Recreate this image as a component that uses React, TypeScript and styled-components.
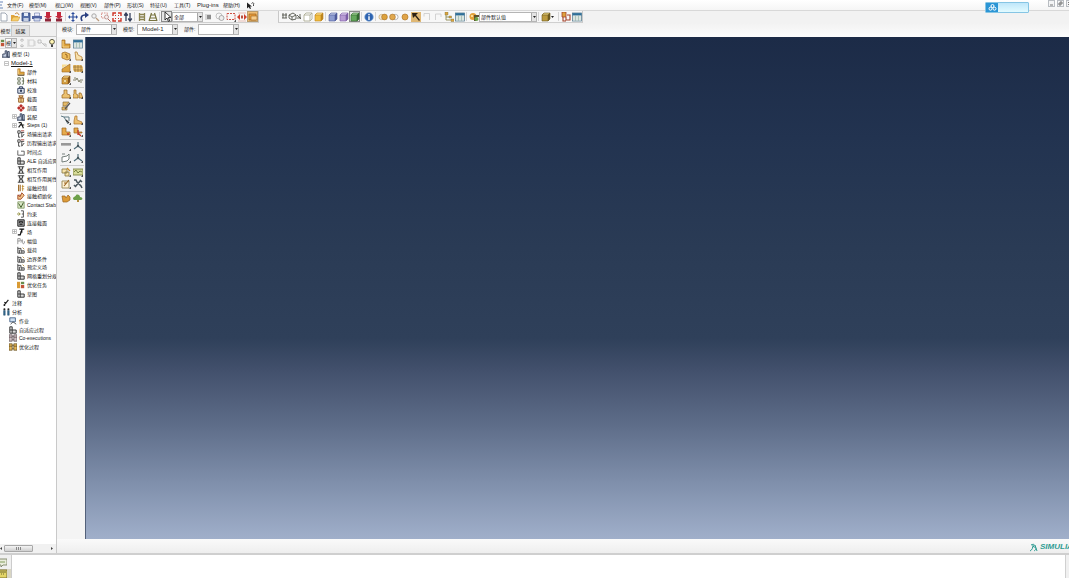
import React from "react";
import styled, { createGlobalStyle, css } from "styled-components";

const GlobalStyle = createGlobalStyle`
  * { box-sizing: border-box; }
  html, body { margin: 0; padding: 0; }
  body {
    font-family: "Liberation Sans", "Noto Sans CJK SC", sans-serif;
    font-size: 5px;
    line-height: 8px;
    color: #222;
    background: #f0f0f0;
    overflow: hidden;
  }
  button, select, input { font: inherit; color: inherit; }
  button { border: 0; padding: 0; background: none; }
`;

const Window = styled.div`
  display: flex;
  flex-direction: column;
  height: 100vh;
  overflow: hidden;
`;

const MenuBar = styled.nav`
  display: flex;
  flex: none;
  align-items: center;
  height: 11px;
  background: linear-gradient(#ffffff, #f5f5f5);
  border-bottom: 1px solid #d8d8d8;
`;

const MenuList = styled.div`
  display: flex;
  align-items: center;
  flex: 1;
`;

const MenuItem = styled.button<{ $latin?: boolean; $w: number }>`
  flex: none;
  width: ${(p) => p.$w}px;
  text-align: left;
  white-space: nowrap;
  font-size: ${(p) => (p.$latin ? 6 : 5)}px;
  line-height: 8px;
`;

const MenuIcon = styled.button`
  width: 7px;
  height: 8px;
  display: flex;
`;

const Badge = styled.div`
  display: flex;
  position: absolute;
  top: 2px;
  right: 40px;
  width: 44px;
  height: 11px;
  border: 1px solid #86c5e4;
  border-radius: 1px;
  background: linear-gradient(#bfe6fa, #e2fbff);
  overflow: hidden;
`;

const BadgeIcon = styled.span`
  display: flex;
  justify-content: center;
  width: 12px;
  background: #2b95d5;
`;

const WindowButtons = styled.div`
  display: flex;
  gap: 2px;
  margin-right: -4px;
  align-self: flex-start;
`;

const WindowButton = styled.button`
  display: flex;
  align-items: center;
  justify-content: center;
  width: 7px;
  height: 7px;
  border: 1px solid #b9bdc2;
  background: #f3f4f5;
`;

const ToolBar = styled.div`
  display: flex;
  flex: none;
  align-items: center;
  height: 12px;
  background: #f2f2f2;
`;

const ToolStrip = styled.div<{ $first?: boolean }>`
  display: flex;
  flex: none;
  align-items: center;
  height: 12px;
  background: #f7f7f7;
  border-bottom: 1px solid #cfcfcf;
  border-right: 1px solid #c8c8c8;
  ${(p) =>
    p.$first
      ? css`margin-left: -2px;`
      : css`
          margin-left: 19px;
          padding-left: 3px;
          border-left: 1px solid #c8c8c8;
        `}
`;

const Divider = styled.i`
  flex: none;
  width: 1px;
  height: 9px;
  margin: 0 1px;
  background: #d4d4d4;
`;

const ToolButton = styled.button<{ $wide?: boolean; $boxed?: boolean; $hot?: boolean }>`
  display: flex;
  flex: none;
  align-items: center;
  justify-content: center;
  width: ${(p) => (p.$wide ? 20 : 11)}px;
  height: 11px;
  ${(p) => p.$boxed && css`border: 1px solid #8b8b8b; background: #e6e6e6;`}
  ${(p) => p.$hot && css`border: 1px solid #b99b6b; background: #f0bd72;`}
`;

const Glyph = styled.svg`
  display: block;
  flex: none;
  width: 10px;
  height: 10px;
`;

const Caret = styled.span`
  display: flex;
  align-items: center;
  width: 6px;
  height: 10px;
`;

const Combo = styled.span<{ $w: number; $tall?: boolean }>`
  display: flex;
  flex: none;
  width: ${(p) => p.$w}px;
  height: ${(p) => (p.$tall ? 11 : 10)}px;
  border: 1px solid #b5b5b5;
  background: #fff;
`;

const ComboSelect = styled.select<{ $latin?: boolean; $indent?: number }>`
  appearance: none;
  flex: 1;
  min-width: 0;
  border: 0;
  margin: 0;
  padding: 0 0 0 ${(p) => p.$indent ?? 1}px;
  background: transparent;
  font-size: ${(p) => (p.$latin ? 6 : 5)}px;
  line-height: 8px;
  outline: 0;
`;

const ComboArrow = styled.span`
  display: flex;
  align-items: center;
  justify-content: center;
  width: 5px;
  background: #e4e4e4;
  border-left: 1px solid #a9a9a9;
`;

const Body = styled.div`
  display: flex;
  flex: 1;
  min-height: 0;
`;

const Sidebar = styled.aside`
  display: flex;
  flex-direction: column;
  flex: none;
  width: 57px;
  border-right: 1px solid #c9c9c9;
  overflow: hidden;
`;

const Tabs = styled.div`
  display: flex;
  align-items: flex-end;
  flex: none;
  height: 14px;
  padding-top: 2px;
  border-bottom: 1px solid #c9c9c9;
`;

const Tab = styled.button<{ $active?: boolean }>`
  height: ${(p) => (p.$active ? 12 : 11)}px;
  width: ${(p) => (p.$active ? 12 : 18)}px;
  color: #111;
  white-space: nowrap;
  overflow: hidden;
  border-top: 1px solid ${(p) => (p.$active ? "#f4f4f4" : "#c9c9c9")};
  border-right: 1px solid #c9c9c9;
  background: ${(p) => (p.$active ? "#f4f4f4" : "#e3e3e3")};
`;

const TreeTools = styled.div`
  display: flex;
  flex: none;
  align-items: center;
  height: 12px;
  margin-left: -3px;
  background: #f4f4f4;
  border-bottom: 1px solid #dcdcdc;
`;

const TreePane = styled.div`
  flex: 1;
  min-height: 0;
  padding-top: 1px;
  background: #fff;
  overflow: hidden;
`;

const TreeList = styled.ul`
  display: flex;
  flex-direction: column;
  height: 60vh;
  max-height: 302px;
  margin: 0;
  padding: 0;
  list-style: none;
`;

const TreeRow = styled.li<{ $level: number; $latin?: boolean }>`
  display: flex;
  flex: 1;
  align-items: center;
  min-height: 0;
  padding-left: ${(p) => [2, 4, 12, 9][p.$level]}px;
  font-size: ${(p) => (p.$latin ? 6 : 5)}px;
  line-height: 8px;
  white-space: nowrap;
  color: #151515;
`;

const Expander = styled.span`
  display: flex;
  flex: none;
  width: 5px;
`;

const TreeLink = styled.a<{ $current?: boolean }>`
  color: inherit;
  text-decoration: ${(p) => (p.$current ? "underline" : "none")};
  margin-left: 2px;
`;

const TreeGlyph = styled(Glyph)`
  width: 8px;
  height: 8px;
`;

const ScrollTrack = styled.div`
  display: flex;
  flex: none;
  align-items: center;
  justify-content: space-between;
  height: 9px;
  padding-right: 2px;
  background: #f1f1f1;
`;

const ScrollThumb = styled.span`
  display: flex;
  align-items: center;
  justify-content: center;
  gap: 1px;
  width: 29px;
  height: 7px;
  margin-right: auto;
  border: 1px solid #a8a8a8;
  border-radius: 1px;
  background: linear-gradient(#f4f4f4, #cfcfcf);
`;

const Grip = styled.i`
  width: 1px;
  height: 3px;
  background: #888;
`;

const Main = styled.main`
  display: flex;
  flex: 1;
  flex-direction: column;
  min-width: 0;
`;

const ContextBar = styled.div`
  display: flex;
  flex: none;
  align-items: center;
  gap: 6px;
  height: 14px;
  padding: 0 5px 2px;
  background: linear-gradient(#f2f2f2, #fcfcfc);
`;

const Field = styled.label`
  display: flex;
  align-items: center;
  gap: 1px;
  white-space: nowrap;
`;

const FieldText = styled.span`
  width: 13px;
`;

const Workspace = styled.div`
  display: flex;
  flex: 1;
  min-height: 0;
`;

const ToolBox = styled.div`
  flex: none;
  width: 28px;
  padding: 1px 1px 0 3px;
  background: #f4f4f4;
`;

const ToolBoxGroup = styled.div`
  display: grid;
  grid-template-columns: 12px 12px;
  grid-auto-rows: 12px;
  place-items: center;
  & + & {
    margin-top: 1px;
    border-top: 1px solid #cccccc;
  }
`;

const Viewport = styled.section`
  flex: 1;
  border-left: 1px solid #53617a;
  background: linear-gradient(
    #1c2b47 0%,
    #223350 20%,
    #2a3b55 42%,
    #2f405a 60%,
    #414f6b 66%,
    #5d6c88 77%,
    #8090ac 89%,
    #a0afca 100%
  );
`;

const BrandBar = styled.footer`
  display: flex;
  flex: none;
  align-items: center;
  justify-content: flex-end;
  height: 14px;
  padding-top: 2px;
  background: linear-gradient(#fafafa, #eeeeee);
`;

const Brand = styled.span`
  display: flex;
  flex: none;
  align-items: center;
  gap: 2px;
  width: 40px;
  overflow: hidden;
  color: #2f9c93;
  font-size: 8px;
  font-style: italic;
  font-weight: bold;
  line-height: 10px;
`;

const BrandMark = styled.svg`
  flex: none;
  width: 9px;
  height: 9px;
`;

const MessageArea = styled.div`
  display: flex;
  flex: none;
  height: 25px;
  border-top: 2px solid #cfcfcf;
`;

const MessageTabs = styled.div`
  display: flex;
  flex: none;
  flex-direction: column;
  gap: 2px;
  width: 12px;
  padding-top: 2px;
  border-right: 1px solid #cccccc;
`;

const MessageTab = styled.button<{ $on?: boolean }>`
  height: 11px;
  display: flex;
  margin-left: -3px;
  background: ${(p) => (p.$on ? "#d9d6c4" : "transparent")};
`;

const MessageLog = styled.div`
  flex: 1;
  margin-right: 3px;
  background: #fff;
  border-right: 1px solid #d0d0d0;
`;

const gold = "#dda23c";
const brown = "#9a6420";
const ink = "#333";

const partShape = (
  <>
    <path d="M1 1h3v4h5v4H1z" fill={gold} stroke={brown} strokeWidth=".7" />
    <path d="M2 2v6h6" stroke="#f6d48a" fill="none" />
  </>
);
const more = <path d="M8 9.8h2V7.8z" fill="#222" />;
const cube = (a: string, b: string, c: string) => (
  <>
    <path d="M1 3l2-2h6v6L7 9H1z" fill={a} />
    <path d="M1 3l2-2h6L7 3z" fill={b} />
    <path d="M7 3l2-2v6L7 9z" fill={c} />
    <path d="M1 3h6v6H1zM1 3l2-2h6v6L7 9M7 3l2-2" fill="none" stroke={c} strokeWidth=".6" />
  </>
);
const treePart = (
  <path d="M1 1h3v4h5v4H1zM4 5v4M1 5h3" fill="#ddd" stroke={ink} strokeWidth="1.2" />
);
const table = (
  <>
    <rect x=".5" y="1" width="9" height="8" fill="#fff" stroke="#5b7f92" strokeWidth=".8" />
    <path d="M.5 2.3h9" stroke="#2f6f98" strokeWidth="2.4" />
    <path d="M1 5h8M1 7h8M3.5 3v6M6.5 3v6" stroke="#9ab4a8" strokeWidth=".7" />
  </>
);

const drawings: Record<string, React.ReactNode> = {
  file: <path d="M2 1h4l2 2v6H2z" fill="#fff" stroke="#8a94a3" strokeWidth=".8" />,
  open: (
    <>
      <path d="M1 3h3l1 1h3v5H1z" fill="#e2a63d" />
      <path d="M1 9l2-4h7L8 9z" fill="#f7cf6f" stroke="#c18a2a" strokeWidth=".5" />
      <path d="M5 2c2-2 3-1 4 1" stroke="#c07c28" fill="none" />
    </>
  ),
  save: (
    <>
      <path d="M1 1h8v8H1z" fill="#5670a8" stroke="#30487c" strokeWidth=".8" />
      <path d="M3 1h4v3H3z" fill="#e3ebf7" />
      <path d="M2.5 6h5v3h-5z" fill="#c5d0e4" />
    </>
  ),
  print: (
    <>
      <path d="M2.5 1h5v3h-5z" fill="#eef" stroke="#6677a3" strokeWidth=".6" />
      <path d="M0 4h10v3H0z" fill="#5063a0" />
      <path d="M2 6h6v3H2z" fill="#d6def0" stroke="#5063a0" strokeWidth=".6" />
    </>
  ),
  db: (
    <>
      <path d="M3 0h4v4h2L5 7 1 4h2z" fill="#c3283c" />
      <path d="M2 6.5h6v3H2z" fill="#8e2639" />
    </>
  ),
  pan: (
    <path
      d="M5 0l2 2H5.6v2.4H8V3l2 2-2 2V5.6H5.6V8H7l-2 2-2-2h1.4V5.6H2V7L0 5l2-2v1.4h2.4V2H3z"
      fill="#2b4c9b"
    />
  ),
  rotate: (
    <>
      <path d="M3 9C1 5 3 2.500 7 3" fill="none" stroke="#2a3f80" strokeWidth="1.6" />
      <path d="M6 0l4 3-4 3z" fill="#2a3f80" />
    </>
  ),
  zoom: (
    <>
      <circle cx="4" cy="4" r="2.2" fill="#f3f3f3" stroke="#a8a8a8" />
      <path d="M6 6l3 3" stroke="#b99a7c" strokeWidth="1.3" />
    </>
  ),
  zoomBox: (
    <>
      <path d="M.5 1h6v5h-6z" fill="none" stroke="#d57c72" strokeDasharray="1.5 1" strokeWidth=".8" />
      <circle cx="5.5" cy="5" r="2" fill="#f5eeee" stroke="#b98b86" strokeWidth=".8" />
      <path d="M7 7l2.5 2.5" stroke="#b06a60" />
    </>
  ),
  fit: (
    <>
      <path d="M1 4V1h3M6 1h3v3M9 6v3H6M4 9H1V6" fill="none" stroke="#cf3426" strokeWidth="1.4" />
      <path d="M3 3l1 1M7 3L6 4M3 7l1-1M7 7L6 6" stroke="#cf3426" />
    </>
  ),
  updown: (
    <path
      d="M3 9V2M1.2 3.5L3 1l1.8 2.500M7 1v7M5.200 6.500L7 9l1.800-2.500"
      fill="none"
      stroke="#35405c"
      strokeWidth="1.3"
    />
  ),
  grid: (
    <path d="M2.500 1v8M7.500 1v8M2 2.5h6M2 5h6M2 7.5h6" fill="none" stroke="#8b8351" strokeWidth="1.3" />
  ),
  persp: (
    <path d="M3.5 1L1 9M6.5 1L9 9M3 3h4M2 6h6M1 8.5h8" fill="none" stroke="#77733f" strokeWidth="1.2" />
  ),
  cursor: (
    <path d="M3 0v8l2-2 1.5 3.5 1.2-.6L6.3 5.5H9z" fill="#fff" stroke="#222" strokeWidth=".9" />
  ),
  dot: (
    <>
      <path d="M1 2h6v6H1z" fill="#d9d9d9" />
      <path d="M3 3h4v4H3z" fill="#8c8c8c" />
    </>
  ),
  rings: (
    <>
      <circle cx="4" cy="4" r="3" fill="none" stroke="#b5b5b5" strokeWidth=".8" />
      <circle cx="6.5" cy="6" r="2.5" fill="#eee" stroke="#999" strokeWidth=".8" />
    </>
  ),
  dashBox: (
    <>
      <path d="M1 1.5h8v6H1z" fill="none" stroke="#cf5044" strokeDasharray="2 1" />
      {more}
    </>
  ),
  redArrows: (
    <>
      <path d="M0 5l3-3v6zM10 5L7 2v6z" fill="#d0402d" />
      <path d="M4 3.500h2v3H4z" fill="#b8503d" />
      <path d="M1 1h8M1 9h8" stroke="#e0a397" strokeWidth=".7" />
    </>
  ),
  orangeBox: (
    <>
      <path d="M1 2h7v6H1z" fill="#e89b36" stroke="#9b6426" strokeWidth=".7" />
      <path d="M3 4h6v4H3z" fill="#f7cd8a" stroke="#9b6426" strokeWidth=".6" />
    </>
  ),
  wire: <path d="M1 3l2-2h6v6L7 9H1zM1 3h6v6M7 3l2-2" fill="#fff" stroke="#a4a48a" strokeWidth=".8" />,
  solid: cube("#f1bd3e", "#ffe28a", "#bd8520"),
  blueCube: cube("#8d9cd0", "#c0caea", "#4d5b9a"),
  violetCube: cube("#b79bd3", "#dccdee", "#7d5da6"),
  greenCube: cube("#65a85c", "#9fd093", "#32692f"),
  oliveCube: cube("#bb9a3f", "#e3ca78", "#6d5a22"),
  info: (
    <>
      <circle cx="5" cy="5" r="4.3" fill="#2d63b0" stroke="#8eb0da" strokeWidth=".7" />
      <path d="M5 2v1.3M5 4.2V8" stroke="#fff" strokeWidth="1.4" />
    </>
  ),
  ball2: (
    <>
      <circle cx="3.5" cy="5" r="2.6" fill="#f3ead8" stroke="#c7a669" strokeWidth=".7" />
      <circle cx="6.5" cy="5" r="2.9" fill={gold} stroke={brown} strokeWidth=".5" />
    </>
  ),
  ball2b: (
    <>
      <circle cx="6.5" cy="5" r="2.6" fill="#fff" stroke="#999" strokeWidth=".7" />
      <circle cx="3.5" cy="5" r="2.9" fill="#e0a84e" stroke={brown} strokeWidth=".5" />
    </>
  ),
  ball: <circle cx="5" cy="5" r="3" fill="#e0a448" stroke="#b27a2b" strokeWidth=".7" />,
  paint: (
    <>
      <path d="M0 0h10v10H0z" fill="#e0b874" />
      <path d="M1 1h6L5 3l4 5-1 1-4-5-2 2z" fill="#2b2014" />
    </>
  ),
  undo: <path d="M2 1.5h5.5V8M2 1.5v3" fill="none" stroke="#c9c9c9" strokeWidth=".8" />,
  redo: <path d="M8 2H2.5v6M8 2v3" fill="none" stroke="#c9c9c9" strokeWidth=".8" />,
  tree: (
    <>
      <path d="M2 1v7h6M2 5h3" stroke="#8f8a54" fill="none" strokeWidth=".9" />
      <path d="M1 0h3v3H1zM5 4h2.5v2H5zM7 7h3v2.5H7z" fill={gold} stroke="#77733f" strokeWidth=".4" />
    </>
  ),
  table,
  palette: (
    <>
      <circle cx="4" cy="4.5" r="3.5" fill="#e2a13a" />
      <path d="M5 3h5v2H7v4H5z" fill="#5d5130" />
      <circle cx="3" cy="4" r="1" fill="#fff0b8" />
      <circle cx="7.5" cy="7" r="2" fill="#6aa247" />
    </>
  ),
  hier: (
    <>
      <path d="M1 0h4v5H1z" fill={gold} stroke="#a3432b" strokeWidth=".8" />
      <path d="M2 5v4h3M6 3h3v5H5V5" stroke="#a3432b" fill="none" strokeWidth="1.1" />
    </>
  ),
  part: partShape,
  partCube: (
    <>
      <path d="M1 2l3-1 5 2v5L6 9 1 7z" fill="#edbd5e" stroke={brown} strokeWidth=".7" />
      <path d="M4 3l2 1v3" fill="none" stroke={brown} />
      {more}
    </>
  ),
  partLight: (
    <>
      <path d="M2 1h2l1 3 4 2v3H3z" fill="#f9e2ad" stroke="#b68337" strokeWidth=".8" />
      {more}
    </>
  ),
  wedge: (
    <>
      <path d="M1 9V6l8-5v8z" fill={gold} stroke={brown} strokeWidth=".6" />
      <path d="M1 1.500h6L1 5z" fill="#f8dc90" />
      {more}
    </>
  ),
  mesh: (
    <>
      <path d="M0 2h8l2 2v5H2L0 7z" fill="#ecc170" />
      <path d="M0 4h9M2 2v7M5 2v7M8 2v7M1 7h9" stroke="#8a652c" strokeWidth=".6" />
      {more}
    </>
  ),
  dice: (
    <>
      {cube("#e6aa3e", "#ffdc86", "#80531b")}
      <circle cx="4" cy="6" r="1.5" fill="#fff0b8" stroke={brown} strokeWidth=".5" />
      {more}
    </>
  ),
  link: (
    <path d="M0 5h3l1-2 2 4 1-2h3M1 3h2M7 7h2" fill="none" stroke="#76775e" strokeWidth=".9" />
  ),
  cone: (
    <>
      <path d="M3 1h3v4l3 1v3H1V6l2-1z" fill="#ecc271" stroke={brown} strokeWidth=".7" />
      {more}
    </>
  ),
  conePair: (
    <>
      <path d="M1 1h2v4l2 1v3H0V6l1-1zM6 4h2l2 5H6z" fill="#ecc271" stroke={brown} strokeWidth=".7" />
      {more}
    </>
  ),
  pencil: (
    <>
      <path d="M2 1h6L5 5H2zM1 6h5v3H1z" fill="#e6bb69" stroke="#765a2b" strokeWidth=".6" />
      <path d="M9 2L4 8" stroke="#555" strokeWidth="1.2" />
    </>
  ),
  sketch: (
    <>
      <path d="M0 1l3 1 4 7M3 2h5v4" fill="none" stroke="#5f7a84" />
      <path d="M5 5l3 3" stroke="#333" strokeWidth="1.3" />
      {more}
    </>
  ),
  foot: (
    <>
      <path d="M2 1h2v4l5 2v2H1V6z" fill="#eec070" stroke="#ac742a" strokeWidth=".7" />
      {more}
    </>
  ),
  partRed: (
    <>
      <path d="M1 1h4v4h4v3H1z" fill="#e7aa4c" stroke={brown} strokeWidth=".7" />
      <path d="M6 7h2" stroke="#c1382a" strokeWidth="1.3" />
      {more}
    </>
  ),
  partCut: (
    <>
      <path d="M1 1h4v4h4v1H1z" fill="#e7aa4c" stroke={brown} strokeWidth=".7" />
      <path d="M5 3v5M5 6l3 3" stroke="#c1382a" strokeWidth="1.3" />
      {more}
    </>
  ),
  ruler: (
    <>
      <path d="M0 3h10M1 2v3M3 2v3M5 2v3M7 2v3M9 2v3" stroke="#666" strokeWidth=".8" />
      {more}
    </>
  ),
  triad: (
    <>
      <path d="M5 1v4L1 8M5 5l4 3" fill="none" stroke="#4c6a76" strokeWidth="1.1" />
      <circle cx="5" cy="5" r="1.2" fill="#47565c" />
      {more}
    </>
  ),
  plane: (
    <>
      <path d="M1 4l5-1 2-2v5L6 8 1 9zM1 1h3" fill="#fff" stroke="#66736f" strokeWidth=".9" />
      {more}
    </>
  ),
  refine: (
    <>
      <path d="M1 2h5v4H1zM4 5h4v4H4z" fill="#f7e3aa" stroke="#85743e" strokeWidth=".8" />
      <path d="M6 1l3 3" stroke="#c98b22" strokeWidth="1.3" />
      {more}
    </>
  ),
  greenTable: (
    <>
      <path d="M0 2h10v6H0z" fill="#d8dc9a" stroke="#7f8344" strokeWidth=".9" />
      <path d="M1 5l2-2 2 3 2-2 2 1" stroke="#5c6a2c" fill="none" strokeWidth=".8" />
      {more}
    </>
  ),
  note: (
    <>
      <path d="M1 2h7v7H1z" fill="#fff3d6" stroke="#94844e" strokeWidth=".9" />
      <path d="M3 7l5-6M3 4h3" stroke="#9b6420" strokeWidth="1.1" />
      {more}
    </>
  ),
  wrench: (
    <path
      d="M1 1l2 0 1 2 4 4 1 2M8 1L2 8M7 1l2 2M1 6l2 2"
      fill="none"
      stroke="#4a565d"
      strokeWidth="1.5"
    />
  ),
  hand: (
    <path d="M1 3h3l1 2 2-3 2 2v3L6 9H2z" fill="#dc9b38" stroke={brown} strokeWidth=".7" />
  ),
  cloud: (
    <>
      <path d="M0 6c0-3 3-2 3-4 2-1 4 0 4 2 3 0 3 3 1 3H1z" fill="#6da04a" />
      <path d="M4 7h2v2H4z" fill="#b28e3b" />
    </>
  ),
  tPart: (
    <>
      {partShape}
      <path d="M1 9h8" stroke="#333" />
    </>
  ),
  tMat: (
    <path d="M1 1h3v3H1zM1 6h3v3H1zM6 1h2v8H6M6 5h3" fill="none" stroke="#5f6b4e" strokeWidth="1.1" />
  ),
  tCal: (
    <>
      <path d="M1 3h8v6H1zM3 3V1h4v2" fill="#dfe5f0" stroke="#32405d" strokeWidth="1.2" />
      <circle cx="5" cy="6" r="1.5" fill="#32405d" />
    </>
  ),
  tSec: (
    <path
      d="M2 1h6M3 1v2h4V1M1 4h8M2 4v5h6V4M5 4v5"
      fill="#f3d190"
      stroke="#935d28"
      strokeWidth="1.1"
    />
  ),
  tProf: (
    <>
      <path d="M5 0l5 5-5 5-5-5z" fill="#b92f2d" />
      <path d="M2 2l6 6M8 2L2 8" stroke="#f4d9cf" strokeWidth=".8" />
    </>
  ),
  tAsm: (
    <path d="M1 9V5h3V1h2v8M7 9V2h2v7zM0 9h10" fill="#c8d2e4" stroke="#3c4861" strokeWidth="1.2" />
  ),
  tStep: <path d="M2 2h3l3 7M5 4L2 8M5 5h4" stroke="#222" strokeWidth="1.5" fill="none" />,
  tOut: (
    <>
      <path
        d="M1 1h3v3H1zM2 4v5h2M5 3h4M6 3v6M9 5L6 9"
        fill="none"
        stroke="#3b3b3b"
        strokeWidth="1.1"
      />
      <path d="M5 1h4" stroke="#b03a30" strokeWidth="1.1" />
    </>
  ),
  tTime: <path d="M1 3v6h8V4H5" fill="none" stroke="#555" strokeWidth="1.1" />,
  tAle: treePart,
  tInt: (
    <path d="M1 1h8M3 1v3h4V1M1 9h8M3 9V6h4v3M5 4v2" fill="none" stroke="#333" strokeWidth="1.2" />
  ),
  tCtl: (
    <>
      <path d="M2 1v8M4 1v8" stroke="#9a6420" strokeWidth="1.3" />
      <path d="M6 3h3M6 6h3M7 1v8" stroke="#c08a2a" />
    </>
  ),
  tInit: (
    <path
      d="M1 9V4l3 2 2-5 3 3-4 5zM1 4h4"
      fill="#f3c98a"
      stroke="#a04824"
      strokeWidth="1.1"
    />
  ),
  tStab: (
    <>
      <path d="M1 1h8v8H1z" fill="#dbe8c8" stroke="#678044" strokeWidth=".8" />
      <path d="M2 3l3 5 3-6" stroke="#3f5a26" fill="none" strokeWidth="1.2" />
    </>
  ),
  tCon: (
    <>
      <path d="M0 5h4M2 3l2 2-2 2" stroke="#8b8733" fill="none" strokeWidth="1.1" />
      <path d="M5 1h3v8H5M8 5H6" fill="none" stroke="#454545" strokeWidth="1.1" />
    </>
  ),
  tConSec: (
    <path d="M1 1h8v8H1zM3 3h4v2H3zM3 7h4" fill="#aaa" stroke="#222" strokeWidth="1.2" />
  ),
  tField: (
    <path d="M3 1.5h6M6.5 1.5L4 8.5H1M4 5h3" fill="none" stroke="#111" strokeWidth="1.5" />
  ),
  tAmp: (
    <path d="M1 9V2h3v3H1M5 7c1-5 2-5 2-1s2 3 3-1" fill="none" stroke="#777" strokeWidth=".9" />
  ),
  tLoad: (
    <>
      <path d="M1 1v8h8V6H5V3H1M3 5v4M6 6v3" fill="#ddd" stroke="#444" strokeWidth="1.1" />
      <path d="M7 2l2 2" stroke="#b08024" />
    </>
  ),
  tOpt: (
    <>
      <path d="M0 1h4v8H0z" fill="#d99a33" />
      <path d="M5 1h4v3H5z" fill="#688c4c" />
      <path d="M5 5h4v4H5z" fill="#c2553a" />
    </>
  ),
  tAnn: <path d="M2 8l2-2 4-5M3 4l2 2M2 8h2" fill="none" stroke="#222" strokeWidth="1.5" />,
  tAna: (
    <>
      <path d="M2 3h2v6H2zM7 3h2v6H7z" fill="#336b91" stroke="#214b6b" strokeWidth=".6" />
      <circle cx="3" cy="1.5" r="1.3" fill="#222" />
      <circle cx="8" cy="1.5" r="1.3" fill="#222" />
    </>
  ),
  tJob: (
    <>
      <path d="M1 1h7v5H1z" fill="#cfe0f2" stroke="#34537a" />
      <path d="M2 9l3-3 4 3" fill="none" stroke="#333" />
    </>
  ),
  tCo: (
    <path
      d="M0 1h4v8H0zM6 1h4v8H6zM4 3h2M4 7h2M0 4h4M6 4h4"
      fill="#cdbfc1"
      stroke="#594b4f"
      strokeWidth=".9"
    />
  ),
  tOptP: (
    <path
      d="M0 1h4v8H0zM6 1h4v8H6zM4 3h2M4 7h2M0 4h4M6 4h4"
      fill="#e6b657"
      stroke="#5e4a1e"
      strokeWidth=".9"
    />
  ),
  bulb: (
    <>
      <circle cx="5" cy="3.8" r="2.4" fill="#fff5b3" stroke="#4c4a35" strokeWidth=".9" />
      <path d="M4 6.500h2v2.500H4z" fill="#444" />
    </>
  ),
  swap: (
    <path d="M5 1v3M3 2.5L5 .8l2 1.7M5 9V6M3 7.5L5 9l2-1.5" stroke="#bbb" fill="none" />
  ),
  faintPage: <path d="M2 2h5v6H2zM1 1v8M8 3v5" stroke="#c4c4c4" fill="none" strokeWidth=".7" />,
  faintLink: <path d="M1 2h3v3H1zM4 4l4 4M6 6h3v3" stroke="#bdbdbd" fill="none" strokeWidth=".9" />,
  help: (
    <>
      <path d="M1 1.500v6l1.600-1.600L4 8l1-.5-1-2h2z" fill="#222" />
      <path d="M5.500 2.500c1-1.500 3-.5 2 1.200V5" stroke="#333" fill="none" strokeWidth=".9" />
    </>
  ),
  message: (
    <>
      <path d="M0 2h10v6H6L4 10V8H0z" fill="#e9eddc" stroke="#7d8467" strokeWidth=".9" />
      <path d="M2 5h6" stroke="#829c5c" />
    </>
  ),
  console: (
    <>
      <path d="M0 1h10v8H0z" fill="#e3d567" stroke="#7a7130" />
      <path d="M1 3h8M2 5h1M4 5h1M6 5h1" stroke="#6f6830" />
    </>
  ),
};

const Icon = ({ name }: { name: string }) => (
  <Glyph viewBox="0 0 10 10" aria-hidden="true">
    {drawings[name]}
  </Glyph>
);

const Tools = ({ names }: { names: string[] }) => (
  <>
    {names.map((n, i) => (
      <ToolButton
        key={i}
        aria-label={n}
        $boxed={n === "cursor" || n === "greenCube"}
        $hot={n === "orangeBox"}
      >
        <Icon name={n} />
      </ToolButton>
    ))}
  </>
);

const Arrow = () => (
  <svg width="3" height="2" viewBox="0 0 3 2" aria-hidden="true">
    <path d="M0 0h3L1.5 2z" fill="#222" />
  </svg>
);

type DropDownProps = {
  label?: string;
  value: string;
  width: number;
  latin?: boolean;
  tall?: boolean;
  indent?: number;
};

const DropDown = ({ label, value, width, latin, tall, indent }: DropDownProps) => (
  <Combo $w={width} $tall={tall}>
    <ComboSelect aria-label={label} defaultValue={value} $latin={latin} $indent={indent}>
      <option value={value}>{value}</option>
    </ComboSelect>
    <ComboArrow>
      <Arrow />
    </ComboArrow>
  </Combo>
);

const menus: [string, number][] = [
  ["文件(F)", 22],
  ["模型(M)", 26],
  ["视口(W)", 25],
  ["视图(V)", 24],
  ["部件(P)", 23],
  ["形状(S)", 23],
  ["特征(U)", 24],
  ["工具(T)", 23],
  ["Plug-ins", 26],
  ["帮助(H)", 23],
];

type Row = { level: number; text: string; icon?: string; box?: string; latin?: boolean };

const rows: Row[] = [
  { level: 0, text: "模型 (1)", icon: "tAsm" },
  { level: 1, text: "Model-1", box: "-", latin: true },
  { level: 2, text: "部件", icon: "tPart" },
  { level: 2, text: "材料", icon: "tMat" },
  { level: 2, text: "校准", icon: "tCal" },
  { level: 2, text: "截面", icon: "tSec" },
  { level: 2, text: "剖面", icon: "tProf" },
  { level: 2, text: "装配", icon: "tAsm", box: "+" },
  { level: 2, text: "Steps (1)", icon: "tStep", box: "+" },
  { level: 2, text: "场输出请求", icon: "tOut" },
  { level: 2, text: "历程输出请求", icon: "tOut" },
  { level: 2, text: "时间点", icon: "tTime" },
  { level: 2, text: "ALE 自适应网", icon: "tAle" },
  { level: 2, text: "相互作用", icon: "tInt" },
  { level: 2, text: "相互作用属性", icon: "tInt" },
  { level: 2, text: "接触控制", icon: "tCtl" },
  { level: 2, text: "接触初始化", icon: "tInit" },
  { level: 2, text: "Contact Stab", icon: "tStab" },
  { level: 2, text: "约束", icon: "tCon" },
  { level: 2, text: "连接截面", icon: "tConSec" },
  { level: 2, text: "场", icon: "tField", box: "+" },
  { level: 2, text: "幅值", icon: "tAmp" },
  { level: 2, text: "载荷", icon: "tLoad" },
  { level: 2, text: "边界条件", icon: "tLoad" },
  { level: 2, text: "预定义场", icon: "tLoad" },
  { level: 2, text: "网格重划分规", icon: "tAle" },
  { level: 2, text: "优化任务", icon: "tOpt" },
  { level: 2, text: "草图", icon: "tAle" },
  { level: 0, text: "注释", icon: "tAnn" },
  { level: 0, text: "分析", icon: "tAna" },
  { level: 3, text: "作业", icon: "tJob" },
  { level: 3, text: "自适应过程", icon: "tAle" },
  { level: 3, text: "Co-executions", icon: "tCo" },
  { level: 3, text: "优化过程", icon: "tOptP" },
];

const toolBox = [
  ["part", "table", "partCube", "partLight", "wedge", "mesh", "dice", "link"],
  ["cone", "conePair", "pencil"],
  ["sketch", "foot", "partRed", "partCut"],
  ["ruler", "triad", "plane", "triad"],
  ["refine", "greenTable", "note", "wrench"],
  ["hand", "cloud"],
];

const BoxMark = ({ mark }: { mark?: string }) => (
  <Expander>
    {mark && (
      <svg width="5" height="5" viewBox="0 0 5 5" aria-hidden="true">
        <path
          d={mark === "+" ? "M.5 .5h4v4h-4zM1 2.5h3M2.5 1v3" : "M.5 .5h4v4h-4zM1 2.5h3"}
          fill="#fff"
          stroke="#9a9a9a"
          strokeWidth=".6"
        />
      </svg>
    )}
  </Expander>
);

export default function App() {
  return (
    <Window>
      <GlobalStyle />
      <MenuBar>
        <MenuList>
          <MenuIcon aria-label="窗口">
            <svg width="5" height="8" viewBox="0 0 5 8">
              <path d="M0 1h3M0 4h2M0 7h3" stroke="#6a86b8" />
            </svg>
          </MenuIcon>
          {menus.map(([text, w]) => (
            <MenuItem key={text} $w={w} $latin={text === "Plug-ins"}>
              {text}
            </MenuItem>
          ))}
          <MenuIcon aria-label="帮助">
            <Icon name="help" />
          </MenuIcon>
        </MenuList>
        <WindowButtons>
          {["M1 4h3", "M1 2h2v2H1zM2 1h2v2", "M1 1l3 3M4 1L1 4"].map((d) => (
            <WindowButton key={d} aria-label="窗口按钮">
              <svg width="5" height="5" viewBox="0 0 5 5">
                <path d={d} fill="none" stroke="#777" />
              </svg>
            </WindowButton>
          ))}
        </WindowButtons>
        <Badge>
          <BadgeIcon>
            <svg width="9" height="9" viewBox="0 0 9 9">
              <circle cx="4.5" cy="3" r="1.5" fill="none" stroke="#fff" />
              <circle cx="2.5" cy="5.7" r="1.5" fill="none" stroke="#fff" />
              <circle cx="6.5" cy="5.7" r="1.5" fill="none" stroke="#fff" />
            </svg>
          </BadgeIcon>
        </Badge>
      </MenuBar>

      <ToolBar>
        <ToolStrip $first>
          <Tools names={["file", "open", "save", "print", "db", "db"]} />
          <Divider />
          <Tools names={["pan", "rotate", "zoom", "zoomBox", "fit", "updown"]} />
          <Divider />
          <Tools names={["grid", "persp"]} />
          <Divider />
          <Tools names={["cursor"]} />
          <DropDown label="选择范围" value="全部" width={31} />
          <Tools names={["dot", "rings", "dashBox", "redArrows", "orangeBox"]} />
        </ToolStrip>
        <ToolStrip>
          <ToolButton $wide aria-label="网格显示">
            <svg width="20" height="9" viewBox="0 0 20 9">
              <path
                d="M0 3h5M1 1v5M4 1v5M0 6h5M7 3l4-2 3 2v4l-4 1-3-2zM7 3l3 2 4-2M10 5v3M15 3l4 4M15 6h4M18 2v4"
                fill="none"
                stroke="#55584e"
                strokeWidth=".9"
              />
            </svg>
          </ToolButton>
          <Tools names={["wire", "solid"]} />
          <Divider />
          <Tools names={["blueCube", "violetCube", "greenCube"]} />
          <Divider />
          <Tools names={["info"]} />
          <Divider />
          <Tools names={["ball2", "ball2b", "ball", "paint", "undo", "redo", "tree", "table"]} />
          <Divider />
          <Tools names={["palette"]} />
          <DropDown label="颜色代码" value="部件默认值" width={58} />
          <Divider />
          <Tools names={["oliveCube"]} />
          <Caret>
            <Arrow />
          </Caret>
          <Divider />
          <Tools names={["hier", "table"]} />
        </ToolStrip>
      </ToolBar>

      <Body>
        <Sidebar>
          <Tabs>
            <Tab $active>模型</Tab>
            <Tab>结果</Tab>
          </Tabs>
          <TreeTools>
            <TreeGlyph viewBox="0 0 10 10">{drawings.tOpt}</TreeGlyph>
            <DropDown label="模型数据库" value="模" width={12} indent={0} />
            <Icon name="swap" />
            <Icon name="faintPage" />
            <Icon name="faintLink" />
            <Icon name="bulb" />
          </TreeTools>
          <TreePane>
            <TreeList>
              {rows.map((r) => (
                <TreeRow key={r.text} $level={r.level} $latin={r.latin}>
                  {(r.level === 1 || r.level === 2) && <BoxMark mark={r.box} />}
                  {r.icon && (
                    <TreeGlyph viewBox="0 0 10 10" aria-hidden="true">
                      {drawings[r.icon]}
                    </TreeGlyph>
                  )}
                  <TreeLink href="#" $current={r.level === 1}>
                    {r.text}
                  </TreeLink>
                </TreeRow>
              ))}
            </TreeList>
          </TreePane>
          <ScrollTrack>
            <svg width="4" height="5" viewBox="0 0 4 5">
              <path d="M2 1v3L0 2.5z" fill="#444" />
            </svg>
            <ScrollThumb>
              <Grip />
              <Grip />
              <Grip />
            </ScrollThumb>
            <svg width="3" height="5" viewBox="0 0 3 5">
              <path d="M0 1v3l2-1.5z" fill="#444" />
            </svg>
          </ScrollTrack>
        </Sidebar>

        <Main>
          <ContextBar>
            <Field>
              <FieldText>模块:</FieldText>
              <DropDown value="部件" width={41} tall indent={4} />
            </Field>
            <Field>
              <FieldText>模型:</FieldText>
              <DropDown value="Model-1" width={41} latin tall indent={4} />
            </Field>
            <Field>
              <FieldText>部件:</FieldText>
              <DropDown value="" width={41} tall />
            </Field>
          </ContextBar>
          <Workspace>
            <ToolBox>
              {toolBox.map((group, g) => (
                <ToolBoxGroup key={g}>
                  {group.map((n, i) => (
                    <ToolButton key={i} aria-label={n}>
                      <Icon name={n} />
                    </ToolButton>
                  ))}
                </ToolBoxGroup>
              ))}
            </ToolBox>
            <Viewport aria-label="视口" />
          </Workspace>
          <BrandBar>
            <Brand>
              <BrandMark viewBox="0 0 9 9" aria-hidden="true">
                <path
                  d="M1 8c2-1 3-3 3-6M2 2c2-1 4-1 3 1L3 5M5 4c3 0 2 3 0 4M6 2l2 6"
                  fill="none"
                  stroke="#2f9c93"
                />
              </BrandMark>
              SIMULIA
            </Brand>
          </BrandBar>
        </Main>
      </Body>

      <MessageArea>
        <MessageTabs>
          <MessageTab aria-label="消息区">
            <Icon name="message" />
          </MessageTab>
          <MessageTab $on aria-label="命令行接口">
            <Icon name="console" />
          </MessageTab>
        </MessageTabs>
        <MessageLog />
      </MessageArea>
    </Window>
  );
}
